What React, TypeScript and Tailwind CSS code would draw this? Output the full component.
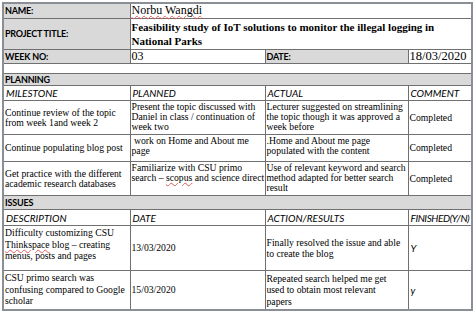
const label = "font-['Lato','Liberation_Sans',sans-serif] font-bold text-[9px] tracking-[-0.2px] text-black pl-[1px] pr-[2px]";
const head = "font-['Lato','Liberation_Sans',sans-serif] italic text-[10px] leading-[12px] text-black px-[2px]";
const serif = "font-['Liberation_Serif','Times_New_Roman',serif] text-[9.7px] text-black px-[1px]";
const cell = "border border-[#707070] py-0 align-middle";
const spell = "underline decoration-wavy decoration-[#e05a5a] decoration-1 underline-offset-1";

type Plan = { milestone: string; planned: React.ReactNode; actual: string; comment: string; h: string };

const plans: Plan[] = [
  {
    milestone: "Continue review of the topic from week 1and week 2",
    planned: "Present the topic discussed with Daniel in class / continuation of week two",
    actual: "Lecturer suggested on streamlining the topic though it was approved a week before",
    comment: "Completed",
    h: "h-[34px]",
  },
  {
    milestone: "Continue populating blog post",
    planned: " work on Home and About me page",
    actual: ".Home and About me page populated with the content",
    comment: "Completed",
    h: "h-[27px]",
  },
  {
    milestone: "Get practice with the different academic research databases",
    planned: (
      <>
        Familiarize with CSU primo
        <br />
        <span className="whitespace-nowrap">
          search – <span className={spell}>scopus</span> and science direct
        </span>
      </>
    ),
    actual: "Use of relevant keyword and search method adapted for better search result",
    comment: "Completed",
    h: "h-[34px]",
  },
];

type Issue = { desc: React.ReactNode; date: string; action: React.ReactNode; done: string; h: string };

const issues: Issue[] = [
  {
    desc: (
      <>
        Difficulty customizing CSU <span className={spell}>Thinkspace</span> blog – creating menus, posts and pages
      </>
    ),
    date: "13/03/2020",
    action: "Finally resolved the issue and able to create the blog",
    done: "Y",
    h: "h-[45px]",
  },
  {
    desc: "CSU primo search was confusing compared to Google scholar",
    date: "15/03/2020",
    action: (
      <>
        Repeated search helped me get used to obtain most relevant
        <br />
        papers
      </>
    ),
    done: "y",
    h: "h-[39px]",
  },
];

export default function App() {
  return (
    <div className="w-[474px] h-[311px] bg-white overflow-hidden pt-[2px] pl-[2px]">
      <table className="border-collapse table-fixed w-[469px] border-2 border-[#8a8f96]">
        <colgroup>
          <col className="w-[127px]" />
          <col className="w-[135px]" />
          <col className="w-[143px]" />
          <col className="w-[64px]" />
        </colgroup>
        <tbody>
          <tr className="h-[15px]">
            <td className={`${cell} bg-[#d9d9d9] ${label}`}>NAME:</td>
            <td colSpan={3} className={`${cell} px-[1px] font-['Liberation_Serif',serif] text-[12px] leading-[13px]`}>
              <span className={spell}>Norbu Wangdi</span>
            </td>
          </tr>
          <tr className="h-[31px]">
            <td className={`${cell} bg-[#d9d9d9] ${label}`}>PROJECT TITLE:</td>
            <td colSpan={3} className={`${cell} px-[1px] font-['Liberation_Serif',serif] font-bold text-[11px] leading-[14px]`}>
              Feasibility study of IoT solutions to monitor the illegal logging in National Parks
            </td>
          </tr>
          <tr className="h-[14px]">
            <td className={`${cell} bg-[#d9d9d9] ${label}`}>WEEK NO:</td>
            <td className={`${cell} px-[1px] font-['Liberation_Serif',serif] text-[12px] leading-[13px]`}>03</td>
            <td className={`${cell} bg-[#d9d9d9] ${label}`}>DATE:</td>
            <td className={`${cell} px-[1px] font-['Liberation_Serif',serif] text-[12.5px] leading-[13px]`}>18/03/2020</td>
          </tr>
          <tr className="h-[10px]">
            <td colSpan={4} className={cell}></td>
          </tr>
          <tr className="h-[12px]">
            <td colSpan={4} className={`${cell} bg-[#d9d9d9] ${label} leading-[11px]`}>PLANNING</td>
          </tr>
          <tr className="h-[15px]">
            <td className={`${cell} ${head}`}>MILESTONE</td>
            <td className={`${cell} ${head}`}>PLANNED</td>
            <td className={`${cell} ${head}`}>ACTUAL</td>
            <td className={`${cell} ${head}`}>COMMENT</td>
          </tr>
          {plans.map((p, i) => (
            <tr key={i} className={p.h}>
              <td className={`${cell} ${serif} leading-[10px]`}>{p.milestone}</td>
              <td className={`${cell} ${serif} leading-[10px] align-top pt-[1px] whitespace-pre-wrap`}>{p.planned}</td>
              <td className={`${cell} ${serif} leading-[10px] align-top pt-[1px]`}>{p.actual}</td>
              <td className={`${cell} ${serif} leading-[10px]`}>{p.comment}</td>
            </tr>
          ))}
          <tr className="h-[14px]">
            <td colSpan={4} className={`${cell} bg-[#d9d9d9] ${label} leading-[11px]`}>ISSUES</td>
          </tr>
          <tr className="h-[16px]">
            <td className={`${cell} ${head}`}>DESCRIPTION</td>
            <td className={`${cell} ${head}`}>DATE</td>
            <td className={`${cell} ${head}`}>ACTION/RESULTS</td>
            <td className={`${cell} ${head} tracking-[-0.4px] px-[1px]`}>FINISHED(Y/N)</td>
          </tr>
          {issues.map((s, i) => (
            <tr key={i} className={s.h}>
              <td className={`${cell} ${serif} leading-[11.5px] align-top pt-[1px]`}>{s.desc}</td>
              <td className={`${cell} ${serif} leading-[11.5px]`}>{s.date}</td>
              <td className={`${cell} ${serif} leading-[11.5px]`}>{s.action}</td>
              <td className={`${cell} ${head}`}>{s.done}</td>
            </tr>
          ))}
        </tbody>
      </table>
    </div>
  );
}
